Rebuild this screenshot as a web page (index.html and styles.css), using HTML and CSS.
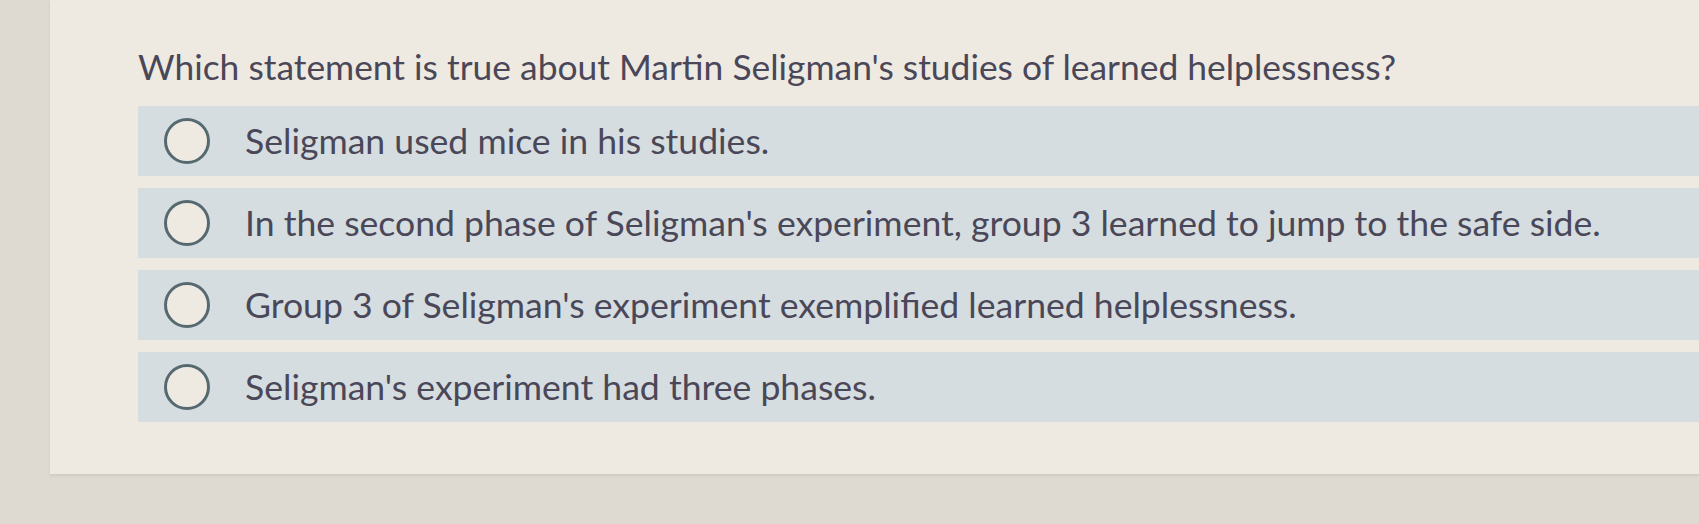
FILE: index.html
```html
<!DOCTYPE html>
<html>
<head>
<meta charset="utf-8">
<link rel="stylesheet" href="styles.css">
</head>
<body>
<div class="page">
  <div class="card">
    <div class="question">Which statement is true about Martin Seligman's studies of learned helplessness?</div>
    <div class="options">
      <div class="option"><span class="radio"></span><span class="label">Seligman used mice in his studies.</span></div>
      <div class="option"><span class="radio"></span><span class="label">In the second phase of Seligman's experiment, group 3 learned to jump to the safe side.</span></div>
      <div class="option"><span class="radio"></span><span class="label">Group 3 of Seligman's experiment exemplified learned helplessness.</span></div>
      <div class="option"><span class="radio"></span><span class="label">Seligman's experiment had three phases.</span></div>
    </div>
  </div>
</div>
</body>
</html>
```
FILE: styles.css
```css
html, body {
  margin: 0;
  padding: 0;
}
body {
  width: 1699px;
  height: 524px;
  overflow: hidden;
  background: #dfdad1;
  font-family: "Lato", "Liberation Sans", sans-serif;
  color: #4a4758;
}
.page {
  padding-left: 50px;
}
.card {
  height: 474px;
  box-sizing: border-box;
  background: #eeeae2;
  padding: 47px 0 0 88px;
  box-shadow: 0 2px 3px rgba(0,0,0,0.08);
}
.question {
  font-size: 35.4px;
  line-height: 40px;
  margin-bottom: 19px;
  white-space: nowrap;
}
.options {
  display: flex;
  flex-direction: column;
  gap: 12px;
}
.option {
  height: 70px;
  background: #d5dde0;
  display: flex;
  align-items: center;
  padding-left: 26px;
  gap: 35px;
}
.radio {
  width: 40px;
  height: 40px;
  border: 3px solid #566870;
  border-radius: 50%;
  background: #eeeae2;
  flex: none;
}
.label {
  font-size: 35.6px;
  line-height: 40px;
  white-space: nowrap;
}
```
